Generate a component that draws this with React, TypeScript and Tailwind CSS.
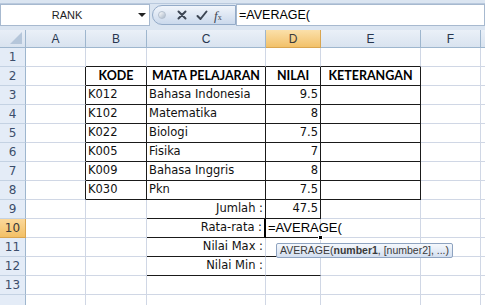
import React from "react";

type Cell = { t?: string; a?: "l" | "c" | "r"; b?: boolean };

const data: Record<number, Record<number, Cell>> = {
  2: {
    2: { t: "KODE", a: "c", b: true },
    3: { t: "MATA PELAJARAN", a: "c", b: true },
    4: { t: "NILAI", a: "c", b: true },
    5: { t: "KETERANGAN", a: "c", b: true },
  },
  3: { 2: { t: "K012" }, 3: { t: "Bahasa Indonesia" }, 4: { t: "9.5", a: "r" } },
  4: { 2: { t: "K102" }, 3: { t: "Matematika" }, 4: { t: "8", a: "r" } },
  5: { 2: { t: "K022" }, 3: { t: "Biologi" }, 4: { t: "7.5", a: "r" } },
  6: { 2: { t: "K005" }, 3: { t: "Fisika" }, 4: { t: "7", a: "r" } },
  7: { 2: { t: "K009" }, 3: { t: "Bahasa Inggris" }, 4: { t: "8", a: "r" } },
  8: { 2: { t: "K030" }, 3: { t: "Pkn" }, 4: { t: "7.5", a: "r" } },
  9: { 3: { t: "Jumlah :", a: "r" }, 4: { t: "47.5", a: "r" } },
  10: { 3: { t: "Rata-rata :", a: "r" } },
  11: { 3: { t: "Nilai Max :", a: "r" } },
  12: { 3: { t: "Nilai Min :", a: "r" } },
};

const letters = ["A", "B", "C", "D", "E", "F", ""];

function rightBorder(r: number, c: number): string {
  if (r === 10 && c === 3) return "border-r-2 border-r-black";
  if (r >= 2 && r <= 8 && c >= 1 && c <= 5) return "border-r border-r-[#1a1a1a]";
  if (r === 9 && (c === 3 || c === 4)) return "border-r border-r-[#1a1a1a]";
  return "border-r border-r-[#d0d7e5]";
}

function bottomBorder(r: number, c: number): string {
  if (r >= 1 && r <= 8 && c >= 2 && c <= 5) return "border-b border-b-[#1a1a1a]";
  if (r >= 9 && r <= 12 && (c === 3 || c === 4)) return "border-b border-b-[#1a1a1a]";
  return "border-b border-b-[#d0d7e5]";
}

function alignCls(a?: "l" | "c" | "r") {
  if (a === "c") return "justify-center";
  if (a === "r") return "justify-end";
  return "justify-start";
}

export default function App() {
  const rows = Array.from({ length: 14 }, (_, i) => i + 1);
  return (
    <div className="relative w-[485px] h-[305px] overflow-hidden bg-white font-['Liberation_Sans',sans-serif]">
      {/* formula bar */}
      <div className="h-[4px] bg-[#dbe5f1] border-b border-b-[#b9c9dd]" />
      <div className="flex h-[22px] bg-[#dbe5f1]">
        <div className="relative flex w-[150px] items-center justify-center bg-white border border-[#a7b9cf] text-[11px] text-[#1e1e1e]">
          <span className="ml-[-16px]">RANK</span>
          <span className="absolute right-[3px] top-[8px] h-0 w-0 border-l-[4px] border-r-[4px] border-t-[4px] border-l-transparent border-r-transparent border-t-[#222]" />
        </div>
        <div className="flex h-[20px] w-[84px] mt-[1px] ml-[2px] items-center rounded-l-full border border-[#94abc8] bg-gradient-to-b from-[#f1f5fb] to-[#cbd9ec]">
          <span className="ml-[5px] h-[8px] w-[8px] rounded-full bg-gradient-to-br from-[#ffffff] to-[#a9b7c8] border border-[#b4c0cf]" />
          <svg className="ml-[11px]" width="10" height="10" viewBox="0 0 10 10">
            <path d="M1.5 1.5 L8.5 8.5 M8.5 1.5 L1.5 8.5" stroke="#3d4654" strokeWidth="2" strokeLinecap="round" />
          </svg>
          <svg className="ml-[9px]" width="12" height="11" viewBox="0 0 12 11">
            <path d="M1.5 6 L4.5 9 L10.5 1.5" stroke="#3d4654" strokeWidth="2" fill="none" strokeLinecap="round" strokeLinejoin="round" />
          </svg>
          <span className="ml-[6px] font-['Liberation_Serif',serif] italic text-[13px] leading-none text-[#3d4654]">
            f<span className="text-[8px] not-italic align-baseline">x</span>
          </span>
        </div>
        <div className="flex flex-1 items-center bg-white border border-[#a7b9cf] pl-[2px] text-[12.5px] text-black">
          =AVERAGE(
        </div>
      </div>
      <div className="h-[4px] bg-[#dbe5f1]" />

      {/* sheet */}
      <div className="grid grid-cols-[26px_60px_61px_119px_55px_100px_60px_1fr] grid-rows-[18px_repeat(14,19px)] text-[11.5px] font-['DejaVu_Sans',sans-serif] text-[#111]">
        {/* header row */}
        <div className="relative border-r border-b border-[#9eb6ce] bg-gradient-to-b from-[#e8eef7] to-[#d9e3ef]">
          <span className="absolute right-[3px] bottom-[3px]" style={{ borderBottom: "12px solid #b5c6da", borderLeft: "12px solid transparent", width: 0, height: 0 }} />
        </div>
        {letters.map((l, i) =>
          i === 3 ? (
            <div key={i} className="flex items-center justify-center border-r border-b border-[#d9a550] bg-gradient-to-b from-[#fbe0a9] to-[#f2c169] text-[12px] text-[#3a3a3a] font-['Liberation_Sans',sans-serif]">
              {l}
            </div>
          ) : (
            <div key={i} className="flex items-center justify-center border-r border-b border-[#9eb6ce] bg-gradient-to-b from-[#eaf0f8] to-[#d9e3ef] text-[12px] text-[#27364f] font-['Liberation_Sans',sans-serif]">
              {l}
            </div>
          )
        )}
        {rows.map((r) => (
          <React.Fragment key={r}>
            {r === 10 ? (
              <div className="flex items-center justify-center border-r border-b border-[#d9a550] bg-gradient-to-b from-[#fbd89a] to-[#f3c065] text-[12px] text-[#3a3a3a]">
                {r}
              </div>
            ) : (
              <div className="flex items-center justify-center border-r border-r-[#9eb6ce] border-b border-b-[#c4d2e3] bg-[#e4ecf7] text-[12px] text-[#3c4e6b]">
                {r < 14 ? r : ""}
              </div>
            )}
            {[1, 2, 3, 4, 5, 6, 7].map((c) => {
              const cell = data[r]?.[c];
              if (r === 10 && c === 4) {
                return (
                  <div key={c} className={`relative flex items-center overflow-visible whitespace-nowrap pl-[2px] text-[13px] text-black font-['Liberation_Sans',sans-serif] z-10 ${bottomBorder(r, c)} border-r border-r-[#d0d7e5]`}>
                    =AVERAGE(
                    <span className="absolute right-[-3px] bottom-[-3px] h-[5px] w-[5px] bg-black border border-white" />
                  </div>
                );
              }
              return (
                <div
                  key={c}
                  className={`flex items-center whitespace-nowrap px-[2px] ${alignCls(cell?.a)} ${rightBorder(r, c)} ${bottomBorder(r, c)} ${cell?.b ? "font-['Lato',sans-serif] font-bold text-[12.5px] text-black" : ""}`}
                >
                  {cell?.t ?? ""}
                </div>
              );
            })}
          </React.Fragment>
        ))}
      </div>

      {/* tooltip */}
      <div className="absolute left-[276px] top-[243px] flex h-[15px] items-center rounded-[2px] border border-[#8ea3c0] bg-gradient-to-b from-[#f5f8fc] to-[#d3dff0] px-[3px] text-[10.5px] leading-none text-[#3a3a3a] font-['Liberation_Sans',sans-serif] whitespace-nowrap">
        AVERAGE(<span className="font-bold">number1</span>, [number2], ...)
      </div>
    </div>
  );
}
